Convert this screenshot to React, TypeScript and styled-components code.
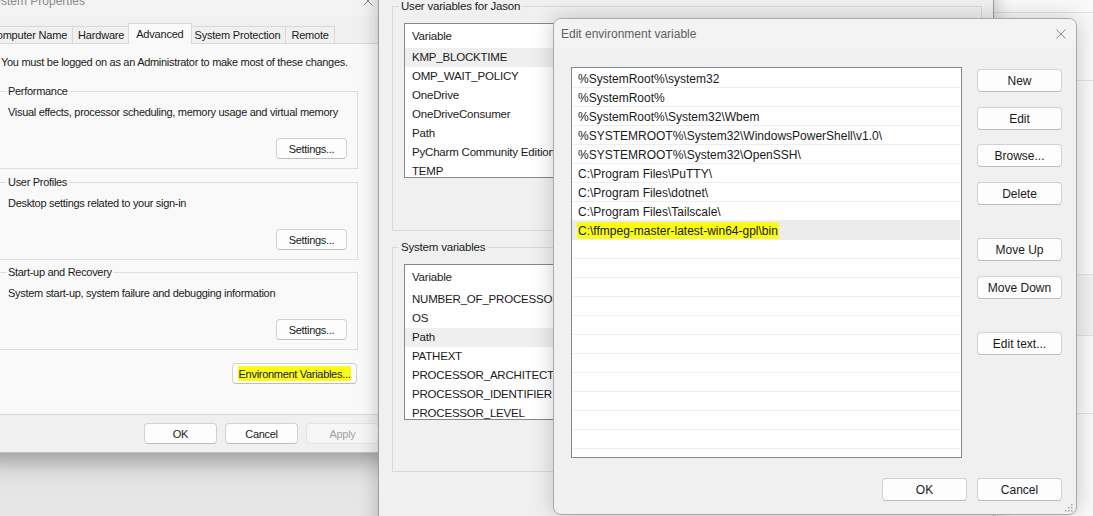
import React from "react";
import styled, { createGlobalStyle } from "styled-components";

const GlobalStyle = createGlobalStyle`
  *, *::before, *::after { box-sizing: border-box; }
  html, body { margin: 0; padding: 0; }
  body {
    width: 1093px;
    height: 516px;
    overflow: hidden;
    font-family: "Liberation Sans", Arial, sans-serif;
    color: #1a1a1a;
    background: #e8e8e8;
  }
`;

const Desktop = styled.main`
  position: relative;
  width: 1093px;
  height: 516px;
  overflow: hidden;
  background: linear-gradient(180deg, #d6d6d6 0%, #e6e6e6 100%);
`;

const Win = styled.section<{ $x: number; $y: number; $w: number; $h: number; $z: number }>`
  position: absolute;
  left: ${(p) => p.$x}px;
  top: ${(p) => p.$y}px;
  width: ${(p) => p.$w}px;
  height: ${(p) => p.$h}px;
  z-index: ${(p) => p.$z};
  display: flex;
  flex-direction: column;
`;

/* ---------- background window on the far right ---------- */
const BackPane = styled(Win)`
  background: #f9f9f9;
`;
const PaneTop = styled.div`
  flex: 0 0 32px;
`;
const PaneSection = styled.div<{ $h: number; $shade?: boolean }>`
  flex: 0 0 ${(p) => p.$h}px;
  border-top: 1px solid #e2e2e2;
  background: ${(p) => (p.$shade ? "#f1f1f1" : "transparent")};
`;

/* ---------- shared ---------- */
const Btn = styled.button<{ $w: number; $h: number; $mt?: number }>`
  width: ${(p) => p.$w}px;
  height: ${(p) => p.$h}px;
  margin-top: ${(p) => p.$mt ?? 0}px;
  flex: 0 0 auto;
  padding: 0;
  font: inherit;
  letter-spacing: inherit;
  color: #1a1a1a;
  background: #fdfdfd;
  border: 1px solid #d2d2d2;
  border-bottom-color: #bdbdbd;
  border-radius: 4px;
  display: inline-flex;
  align-items: center;
  justify-content: center;
  white-space: nowrap;
  &:disabled {
    background: #f6f6f6;
    color: #a3a3a3;
    border-color: #e4e4e4;
  }
`;

const Marker = styled.span`
  background: #fbfb18;
  padding: 2px 1px 1px;
  margin: 0 -1px;
`;

const CloseBox = styled.span<{ $w: number }>`
  flex: 0 0 ${(p) => p.$w}px;
  height: 100%;
  display: flex;
  align-items: center;
  justify-content: center;
  color: #8a8a8a;
`;

const CloseIcon = () => (
  <svg width="10" height="10" viewBox="0 0 10 10" aria-hidden="true">
    <path d="M0.5 0.5L9.5 9.5M9.5 0.5L0.5 9.5" stroke="currentColor" strokeWidth="1" fill="none" />
  </svg>
);

/* ---------- System Properties ---------- */
const SysWindow = styled(Win)`
  background: #f0f0f0;
  border: 1px solid #bfbfbf;
  box-shadow: 0 8px 22px rgba(0, 0, 0, 0.34);
  font-size: 11px;
  letter-spacing: -0.3px;
`;
const SysTitle = styled.header`
  flex: 0 0 30px;
  display: flex;
  align-items: center;
  justify-content: space-between;
  padding-left: 6px;
  background: #f3f3f3;
  color: #8a8a8a;
  font-size: 12px;
  letter-spacing: 0;
`;
const TabStrip = styled.nav`
  flex: 0 0 28px;
  display: flex;
  align-items: flex-end;
  padding-left: 3px;
  margin-bottom: -1px;
  position: relative;
  z-index: 1;
`;
const Tab = styled.div<{ $active?: boolean }>`
  height: ${(p) => (p.$active ? 21 : 18)}px;
  padding: ${(p) => (p.$active ? "2px 7px 0" : "0 5px")};
  margin: 0 ${(p) => (p.$active ? -2 : 0)}px 0 ${(p) => (p.$active ? -2 : -1)}px;
  border: 1px solid #d9d9d9;
  border-bottom: ${(p) => (p.$active ? "none" : "1px solid #d9d9d9")};
  background: ${(p) => (p.$active ? "#f9f9f9" : "#f0f0f0")};
  line-height: 16px;
  letter-spacing: -0.2px;
  white-space: nowrap;
  position: relative;
  z-index: ${(p) => (p.$active ? 2 : 1)};
`;
const TabPanel = styled.div`
  flex: 1;
  margin: 0 7px;
  background: #f9f9f9;
  border: 1px solid #d9d9d9;
  padding: 11px 25px 0 6px;
  display: flex;
  flex-direction: column;
`;
const Intro = styled.p`
  margin: 0 0 0 6px;
  line-height: 14px;
  white-space: nowrap;
`;
const SysGroup = styled.fieldset<{ $mt: number }>`
  margin: ${(p) => p.$mt}px 0 0 0;
  padding: 7px 10px 9px 12px;
  border: 1px solid #dcdcdc;
  min-width: 0;
`;
const SysLegend = styled.legend`
  padding: 0 2px;
  margin-left: -2px;
  line-height: 14px;
  white-space: nowrap;
`;
const GroupBody = styled.div`
  display: flex;
  flex-direction: column;
  align-items: flex-start;
`;
const Desc = styled.div`
  line-height: 14px;
  white-space: nowrap;
`;
const RightBtn = styled(Btn)<{ $mr?: number }>`
  align-self: flex-end;
  margin-right: ${(p) => p.$mr ?? 0}px;
`;
const SysFooter = styled.footer`
  flex: 0 0 37px;
  display: flex;
  align-items: center;
  justify-content: flex-end;
  gap: 8px;
  padding-right: 12px;
`;

/* ---------- Environment Variables ---------- */
const EnvWindow = styled(Win)`
  background: #f0f0f0;
  border: 1px solid #9e9e9e;
  box-shadow: 0 0 18px rgba(0, 0, 0, 0.24);
  font-size: 11.5px;
  letter-spacing: -0.2px;
`;
const EnvTitle = styled.header`
  flex: 0 0 30px;
  display: flex;
  align-items: center;
  padding-left: 12px;
  background: #f3f3f3;
  font-size: 12px;
`;
const EnvBody = styled.div`
  display: flex;
  flex-direction: column;
  padding: 0 11px 0 13px;
`;
const EnvGroup = styled.fieldset<{ $mt: number; $pb: number }>`
  margin: ${(p) => p.$mt}px 0 0 0;
  padding: 10px 11px ${(p) => p.$pb}px 11px;
  border: 1px solid #d8d8d8;
  min-width: 0;
`;
const EnvLegend = styled.legend`
  padding: 0 2px;
  margin-left: -5px;
  line-height: 13px;
  white-space: nowrap;
`;
const ListView = styled.div<{ $h: number }>`
  height: ${(p) => p.$h}px;
  background: #fff;
  border: 1px solid #828790;
  overflow: hidden;
`;
const ListHeader = styled.div<{ $h: number }>`
  height: ${(p) => p.$h}px;
  line-height: ${(p) => p.$h}px;
  padding-left: 7px;
`;
const ListRow = styled.div<{ $selected?: boolean }>`
  height: 19px;
  line-height: 19px;
  padding-left: 7px;
  background: ${(p) => (p.$selected ? "#efefef" : "transparent")};
  white-space: nowrap;
`;
const Cell = styled.span`
  display: inline-block;
  width: 175px;
  overflow: hidden;
  text-overflow: ellipsis;
  vertical-align: top;
`;

/* ---------- Edit environment variable ---------- */
const Dialog = styled(Win)`
  background: #f0f0f0;
  border: 1px solid #a9a9a9;
  border-radius: 8px;
  overflow: hidden;
  box-shadow: 0 0 22px rgba(0, 0, 0, 0.2);
  font-size: 12px;
`;
const DialogTitle = styled.header`
  flex: 0 0 29px;
  display: flex;
  align-items: center;
  justify-content: space-between;
  padding-left: 7px;
  background: #f3f3f3;
  color: #606060;
`;
const DialogBody = styled.div`
  flex: 1;
  display: grid;
  grid-template-columns: 391px 85px;
  grid-template-rows: 391px 23px;
  column-gap: 15px;
  row-gap: 20px;
  padding: 19px 14px 13px 17px;
  position: relative;
`;
const PathList = styled.div`
  background: #fff;
  border: 1px solid #828790;
  padding-top: 1px;
  overflow: hidden;
`;
const PathRow = styled.div<{ $selected?: boolean }>`
  height: 19px;
  padding: 3px 0 0 6px;
  margin-right: 1px;
  line-height: 15px;
  border-bottom: 1px solid #eeeeee;
  background: ${(p) => (p.$selected ? "#ececec" : "transparent")};
  white-space: nowrap;
`;
const ButtonColumn = styled.div`
  display: flex;
  flex-direction: column;
`;
const DialogFooter = styled.div`
  grid-column: 1 / span 2;
  justify-self: end;
  display: flex;
  gap: 10px;
`;
const Grip = styled.svg`
  position: absolute;
  right: 3px;
  bottom: 2px;
`;

const tabs = ["Computer Name", "Hardware", "Advanced", "System Protection", "Remote"];
const groups = [
  { title: "Performance", desc: "Visual effects, processor scheduling, memory usage and virtual memory", mt: 15 },
  { title: "User Profiles", desc: "Desktop settings related to your sign-in", mt: 6 },
  { title: "Start-up and Recovery", desc: "System start-up, system failure and debugging information", mt: 5 },
];
const userVars = [
  "KMP_BLOCKTIME",
  "OMP_WAIT_POLICY",
  "OneDrive",
  "OneDriveConsumer",
  "Path",
  "PyCharm Community Edition",
  "TEMP",
  "TMP",
];
const sysVars = [
  "NUMBER_OF_PROCESSORS",
  "OS",
  "Path",
  "PATHEXT",
  "PROCESSOR_ARCHITECTURE",
  "PROCESSOR_IDENTIFIER",
  "PROCESSOR_LEVEL",
  "PROCESSOR_REVISION",
];
const paths = [
  "%SystemRoot%\\system32",
  "%SystemRoot%",
  "%SystemRoot%\\System32\\Wbem",
  "%SYSTEMROOT%\\System32\\WindowsPowerShell\\v1.0\\",
  "%SYSTEMROOT%\\System32\\OpenSSH\\",
  "C:\\Program Files\\PuTTY\\",
  "C:\\Program Files\\dotnet\\",
  "C:\\Program Files\\Tailscale\\",
  "C:\\ffmpeg-master-latest-win64-gpl\\bin",
];
const sideButtons = [
  { label: "New", mt: 2 },
  { label: "Edit", mt: 15 },
  { label: "Browse...", mt: 14 },
  { label: "Delete", mt: 15 },
  { label: "Move Up", mt: 33 },
  { label: "Move Down", mt: 15 },
  { label: "Edit text...", mt: 33 },
];

export default function App() {
  const rows = Array.from({ length: 22 }, (_, i) => paths[i] ?? "");
  return (
    <Desktop>
      <GlobalStyle />

      <BackPane $x={994} $y={-20} $w={140} $h={600} $z={0}>
        <PaneTop />
        <PaneSection $h={68} />
        <PaneSection $h={194} />
        <PaneSection $h={61} $shade />
        <PaneSection $h={78} />
        <PaneSection $h={200} />
      </BackPane>

      <SysWindow $x={-20} $y={-15} $w={412} $h={468} $z={1}>
        <SysTitle>
          <span>System Properties</span>
          <CloseBox $w={46}>
            <CloseIcon />
          </CloseBox>
        </SysTitle>
        <TabStrip>
          {tabs.map((t) => (
            <Tab key={t} $active={t === "Advanced"}>
              {t}
            </Tab>
          ))}
        </TabStrip>
        <TabPanel>
          <Intro>You must be logged on as an Administrator to make most of these changes.</Intro>
          {groups.map((g) => (
            <SysGroup key={g.title} $mt={g.mt}>
              <SysLegend>{g.title}</SysLegend>
              <GroupBody>
                <Desc>{g.desc}</Desc>
                <RightBtn $w={71} $h={21} $mt={19}>
                  Settings...
                </RightBtn>
              </GroupBody>
            </SysGroup>
          ))}
          <RightBtn $w={125} $h={21} $mt={13} $mr={1}>
            <Marker>Environment Variables...</Marker>
          </RightBtn>
        </TabPanel>
        <SysFooter>
          <Btn $w={73} $h={21}>OK</Btn>
          <Btn $w={73} $h={21}>Cancel</Btn>
          <Btn $w={73} $h={21} disabled>
            Apply
          </Btn>
        </SysFooter>
      </SysWindow>

      <EnvWindow $x={378} $y={-31} $w={616} $h={600} $z={2}>
        <EnvTitle>Environment Variables</EnvTitle>
        <EnvBody>
          <EnvGroup $mt={0} $pb={52}>
            <EnvLegend>User variables for Jason</EnvLegend>
            <ListView $h={155}>
              <ListHeader $h={24}>Variable</ListHeader>
              {userVars.map((v, i) => (
                <ListRow key={v} $selected={i === 0}>
                  <Cell>{v}</Cell>
                </ListRow>
              ))}
            </ListView>
          </EnvGroup>
          <EnvGroup $mt={10} $pb={51}>
            <EnvLegend>System variables</EnvLegend>
            <ListView $h={156}>
              <ListHeader $h={25}>Variable</ListHeader>
              {sysVars.map((v, i) => (
                <ListRow key={v} $selected={i === 2}>
                  <Cell>{v}</Cell>
                </ListRow>
              ))}
            </ListView>
          </EnvGroup>
        </EnvBody>
      </EnvWindow>

      <Dialog $x={553} $y={18} $w={524} $h={497} $z={3}>
        <DialogTitle>
          <span>Edit environment variable</span>
          <CloseBox $w={30}>
            <CloseIcon />
          </CloseBox>
        </DialogTitle>
        <DialogBody>
          <PathList>
            {rows.map((p, i) => (
              <PathRow key={i} $selected={i === 8}>
                {i === 8 ? <Marker>{p}</Marker> : p}
              </PathRow>
            ))}
          </PathList>
          <ButtonColumn>
            {sideButtons.map((b) => (
              <Btn key={b.label} $w={85} $h={23} $mt={b.mt}>
                {b.label}
              </Btn>
            ))}
          </ButtonColumn>
          <DialogFooter>
            <Btn $w={85} $h={23}>OK</Btn>
            <Btn $w={85} $h={23}>Cancel</Btn>
          </DialogFooter>
          <Grip width="8" height="8" viewBox="0 0 8 8" aria-hidden="true">
            {[
              [6, 0],
              [6, 3],
              [3, 3],
              [6, 6],
              [3, 6],
              [0, 6],
            ].map(([x, y]) => (
              <rect key={`${x}-${y}`} x={x} y={y} width="1.5" height="1.5" fill="#a8a8a8" />
            ))}
          </Grip>
        </DialogBody>
      </Dialog>
    </Desktop>
  );
}
